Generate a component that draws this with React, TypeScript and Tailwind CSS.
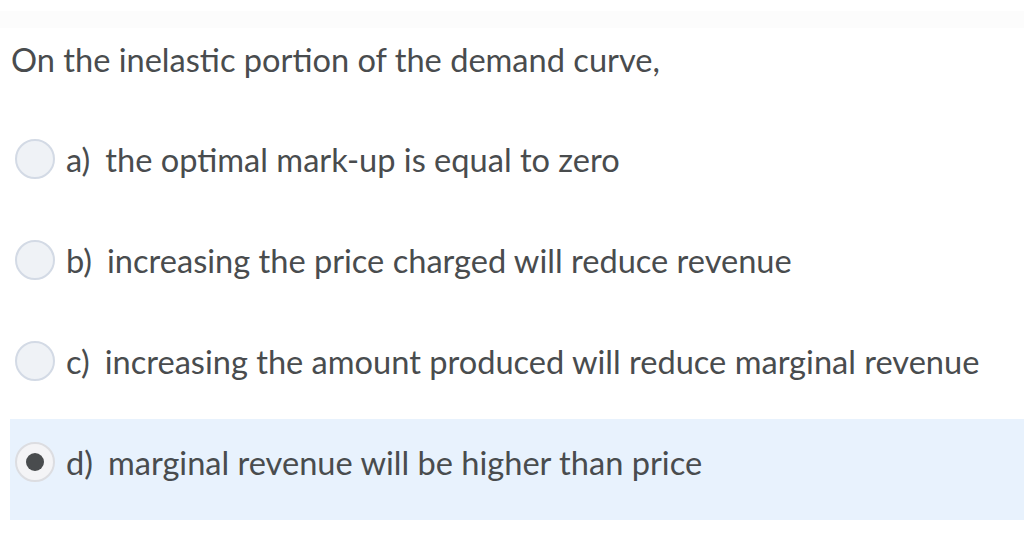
import React from "react";

const options = [
  { key: "a", label: "a)", text: "the optimal mark-up is equal to zero", selected: false },
  { key: "b", label: "b)", text: "increasing the price charged will reduce revenue", selected: false },
  { key: "c", label: "c)", text: "increasing the amount produced will reduce marginal revenue", selected: false },
  { key: "d", label: "d)", text: "marginal revenue will be higher than price", selected: true },
];

export default function App() {
  return (
    <div
      className="w-[1024px] h-[538px] bg-white overflow-hidden text-[#494c4e]"
      style={{ fontFamily: "Lato, 'Open Sans', sans-serif" }}
    >
      <div className="h-[42px] pt-[11px]">
        <div className="h-[17px] bg-[#fcfcfc]" />
      </div>
      <div className="pl-[11px] h-[36px] leading-[36px] text-[32.6px]">
        On the inelastic portion of the demand curve,
      </div>
      <div className="h-[38px]" />
      <div className="pl-[10px]">
        {options.map((o) => (
          <div
            key={o.key}
            className={`h-[101px] flex items-start pt-[23px] pl-[5px] ${
              o.selected ? "bg-[#e8f2fd]" : ""
            }`}
          >
            {o.selected ? (
              <div className="w-[40px] h-[40px] rounded-full border-2 border-[#dcdde1] bg-[#f4f4f6] flex items-center justify-center shrink-0">
                <div className="w-[18px] h-[18px] rounded-full bg-[#494c4e]" />
              </div>
            ) : (
              <div className="w-[40px] h-[40px] rounded-full border-2 border-[#d3dae5] bg-[#eff2f6] shrink-0" />
            )}
            <div className="ml-[11px] h-[40px] leading-[42px] text-[32.6px] whitespace-nowrap flex">
              <span>{o.label}</span>
              <span className="ml-[15px]">{o.text}</span>
            </div>
          </div>
        ))}
      </div>
    </div>
  );
}
